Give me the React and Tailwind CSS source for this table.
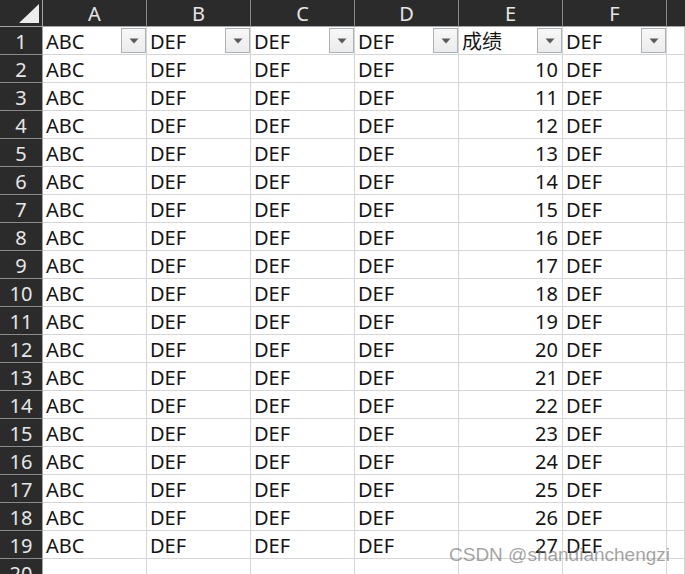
import React from "react";

const cols = ["A", "B", "C", "D", "E", "F"];

function FilterBtn() {
  return (
    <div className="w-[25px] h-[25px] shrink-0 border border-[#aab1b8] bg-gradient-to-b from-[#f7f7f7] to-[#ececec] flex items-center justify-center">
      <svg width="10" height="6" viewBox="0 0 10 6">
        <polygon points="0.5,0.5 9.5,0.5 5,5.5" fill="#5a5a5a" />
      </svg>
    </div>
  );
}

function Cell({ children, right, filter, last }) {
  return (
    <div
      className={`h-[28px] shrink-0 border-r border-b border-[#d6d6d6] flex items-center ${
        last ? "w-[18px]" : "w-[104px]"
      } ${right ? "justify-end pr-[4px]" : filter ? "justify-between pl-[3px]" : "pl-[3px]"}`}
    >
      {children !== undefined && <span className="leading-none pt-[3px]">{children}</span>}
      {filter && <FilterBtn />}
    </div>
  );
}

export default function App() {
  const rows = [];
  for (let r = 2; r <= 19; r++) rows.push(r);
  return (
    <div className="relative w-[685px] h-[574px] overflow-hidden bg-white font-['Noto_Sans','Noto_Sans_CJK_SC',sans-serif] text-[20px] text-[#141414]">
      {/* column header */}
      <div className="flex h-[27px]">
        <div className="w-[43px] h-[27px] shrink-0 bg-[#2b2b2b] border-r border-b border-[#a2a2a2] relative">
          <svg className="absolute left-0 top-0" width="42" height="26" viewBox="0 0 42 26">
            <polygon points="19,23 39,23 39,4" fill="#ececec" />
          </svg>
        </div>
        {cols.map((c) => (
          <div
            key={c}
            className="w-[104px] h-[27px] shrink-0 bg-[#2b2b2b] border-r border-b border-r-[#858585] border-b-[#a8a8a8] flex items-center justify-center text-[#e6e6e6] leading-none pt-[1px]"
          >
            {c}
          </div>
        ))}
        <div className="w-[18px] h-[27px] shrink-0 bg-[#2b2b2b] border-b border-[#a8a8a8]" />
      </div>

      {/* row 1 */}
      <div className="flex">
        <div className="w-[43px] h-[28px] shrink-0 bg-[#2b2b2b] border-r border-b border-r-[#a2a2a2] border-b-[#8a8a8a] flex items-center justify-center text-[#e6e6e6] leading-none pt-[3px]">
          1
        </div>
        <Cell filter>ABC</Cell>
        <Cell filter>DEF</Cell>
        <Cell filter>DEF</Cell>
        <Cell filter>DEF</Cell>
        <Cell filter>成绩</Cell>
        <Cell filter>DEF</Cell>
        <Cell last />
      </div>

      {rows.map((r) => (
        <div key={r} className="flex">
          <div className="w-[43px] h-[28px] shrink-0 bg-[#2b2b2b] border-r border-b border-r-[#a2a2a2] border-b-[#8a8a8a] flex items-center justify-center text-[#e6e6e6] leading-none pt-[3px]">
            {r}
          </div>
          <Cell>ABC</Cell>
          <Cell>DEF</Cell>
          <Cell>DEF</Cell>
          <Cell>DEF</Cell>
          <Cell right>{r + 8}</Cell>
          <Cell>DEF</Cell>
          <Cell last />
        </div>
      ))}

      {/* row 20 */}
      <div className="flex">
        <div className="w-[43px] h-[28px] shrink-0 bg-[#2b2b2b] border-r border-b border-r-[#a2a2a2] border-b-[#8a8a8a] flex items-center justify-center text-[#e6e6e6] leading-none pt-[3px]">
          20
        </div>
        <Cell />
        <Cell />
        <Cell />
        <Cell />
        <Cell />
        <Cell />
        <Cell last />
      </div>

      <div className="absolute right-[15px] bottom-[10px] font-['Liberation_Sans',sans-serif] text-[19px] leading-none text-[#7a7a7a]/70">
        CSDN @shandianchengzi
      </div>
    </div>
  );
}
